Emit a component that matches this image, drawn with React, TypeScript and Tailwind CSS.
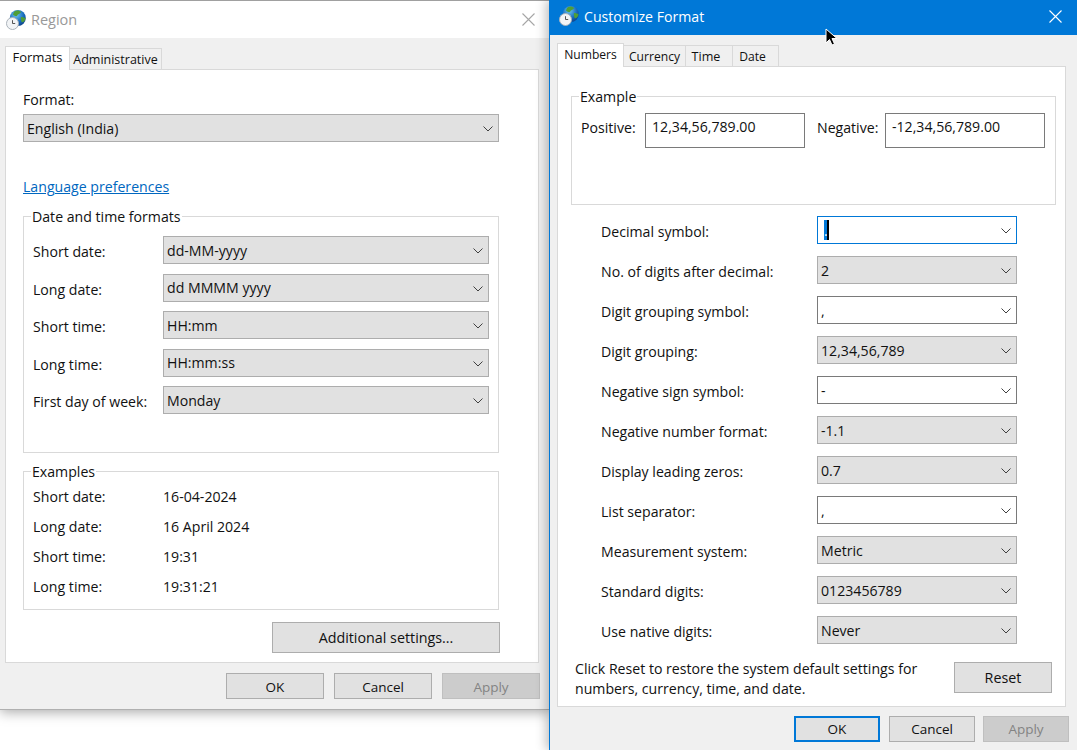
import React from "react";

const font = "font-['Open_Sans','Noto_Sans',sans-serif]";

function Chevron() {
  return (
    <svg width="10" height="6" viewBox="0 0 10 6" className="shrink-0 mt-[2px]">
      <path d="M0.5 0.5 L5 5 L9.5 0.5" fill="none" stroke="#404040" strokeWidth="1" />
    </svg>
  );
}

function GlobeIcon({ id, cls }: { id: string; cls?: string }) {
  return (
    <svg width="20" height="20" viewBox="0 0 20 20" className={`shrink-0 ${cls ?? ""}`}>
      <defs>
        <radialGradient id={id} cx="40%" cy="30%" r="75%">
          <stop offset="0%" stopColor="#6fc4f0" />
          <stop offset="60%" stopColor="#1a6fc0" />
          <stop offset="100%" stopColor="#0d3f86" />
        </radialGradient>
      </defs>
      <circle cx="11.8" cy="8" r="8" fill={`url(#${id})`} />
      <path d="M9 1 C11 0 14 0.5 15.2 2 C14 4 11.5 4 11 6 C9.5 6.5 7.5 5.5 7 4.5 C7.4 3 8 2 9 1Z" fill="#4f9e38" />
      <path d="M15 7 C16.5 7 18.8 7.5 19.6 8.5 C18.7 11.5 17 12.8 15.8 12.2 C15 10.5 14.6 8.5 15 7Z" fill="#4f9e38" />
      <circle cx="6.5" cy="13.5" r="6" fill="#f2f4f6" stroke="#aab2ba" strokeWidth="1" />
      <path d="M6.5 10.2 V13.5 H9.2" fill="none" stroke="#555" strokeWidth="1" />
    </svg>
  );
}

function CloseX({ color }: { color: string }) {
  return (
    <svg width="13" height="13" viewBox="0 0 13 13">
      <path d="M0.5 0.5 L12.5 12.5 M12.5 0.5 L0.5 12.5" stroke={color} strokeWidth="1.1" />
    </svg>
  );
}

function Select({
  value,
  white,
  focus,
  cls,
}: {
  value?: string;
  white?: boolean;
  focus?: boolean;
  cls: string;
}) {
  const skin = focus
    ? "bg-white border-[#0078d7]"
    : white
      ? "bg-white border-[#7a7a7a]"
      : "bg-[#e1e1e1] border-[#adadad]";
  return (
    <div className={`flex items-center justify-between border h-[28px] pl-[3px] pr-[5px] text-[14.13px] text-[#111] ${skin} ${cls}`}>
      {focus ? (
        <span className="flex items-center h-[20px] ml-[3px]">
          <span className="w-[3px] h-[20px] bg-[#0078d7] text-white text-[14px] leading-[22px] overflow-hidden">{value}</span>
          <span className="w-[2px] h-[20px] bg-black" />
        </span>
      ) : (
        <span className="whitespace-nowrap leading-none pt-[2px]">{value}</span>
      )}
      <Chevron />
    </div>
  );
}

function Btn({ label, cls, disabled, primary }: { label: string; cls: string; disabled?: boolean; primary?: boolean }) {
  const skin = disabled
    ? "bg-[#cccccc] border-[#bfbfbf] text-[#838383]"
    : primary
      ? "bg-[#e1e1e1] border-[#0078d7] border-2 text-[#111]"
      : "bg-[#e1e1e1] border-[#adadad] text-[#111]";
  return (
    <div className={`flex items-center justify-center border text-[13.5px] ${skin} ${cls}`}>{label}</div>
  );
}

function Tab({ label, active, cls }: { label: string; active?: boolean; cls: string }) {
  return (
    <div
      className={`flex items-center justify-center border border-[#d9d9d9] text-[#111] whitespace-nowrap ${
        active ? "bg-white border-b-0 h-[24px] relative z-10 -mb-px pb-px" : "bg-[#f0f0f0] border-l-0 border-b-0 h-[21px] pt-[2px]"
      } ${cls}`}
    >
      {label}
    </div>
  );
}

function Legend({ label, cls }: { label: string; cls: string }) {
  return <span className={`absolute top-[-10px] bg-white px-px text-[14.13px] leading-[20px] text-[#111] whitespace-nowrap ${cls}`}>{label}</span>;
}

const dateRows = [
  ["Short date:", "dd-MM-yyyy"],
  ["Long date:", "dd MMMM yyyy"],
  ["Short time:", "HH:mm"],
  ["Long time:", "HH:mm:ss"],
  ["First day of week:", "Monday"],
];
const exampleRows = [
  ["Short date:", "16-04-2024"],
  ["Long date:", "16 April 2024"],
  ["Short time:", "19:31"],
  ["Long time:", "19:31:21"],
];
const numRows: [string, string, "white" | "gray" | "focus"][] = [
  ["Decimal symbol:", ".", "focus"],
  ["No. of digits after decimal:", "2", "gray"],
  ["Digit grouping symbol:", ",", "white"],
  ["Digit grouping:", "12,34,56,789", "gray"],
  ["Negative sign symbol:", "-", "white"],
  ["Negative number format:", "-1.1", "gray"],
  ["Display leading zeros:", "0.7", "gray"],
  ["List separator:", ",", "white"],
  ["Measurement system:", "Metric", "gray"],
  ["Standard digits:", "0123456789", "gray"],
  ["Use native digits:", "Never", "gray"],
];

function RegionWindow() {
  return (
    <div className="absolute left-0 top-0 w-[550px] h-[710px] flex flex-col bg-[#f0f0f0] shadow-[0_2px_12px_rgba(0,0,0,0.35)] border-b border-[#b0b0b0]">
      <div className="h-[38px] bg-white flex items-center pl-[6px] pr-[15px] gap-[5px] border-t border-[#a0a0a0]">
        <GlobeIcon id="g1" />
        <span className="text-[14.5px] text-[#999999] flex-1">Region</span>
        <CloseX color="#a6a6a6" />
      </div>
      <div className="flex items-end pl-[5px] h-[31px]">
        <Tab label="Formats" active cls="w-[65px] text-[13px]" />
        <Tab label="Administrative" cls="w-[92px] border-l text-[12.5px]" />
      </div>
      <div className="ml-[5px] w-[534px] h-[594px] bg-white border border-[#d9d9d9] pt-[20px] pl-[17px] flex flex-col">
        <div className="text-[14.13px] leading-[20px] text-[#111] h-[24px]">Format:</div>
        <Select value="English (India)" cls="w-[476px]" />
        <div className="mt-[35px] text-[14.13px] leading-[20px] text-[#0067c0] underline">Language preferences</div>
        <div className="relative mt-[19px] w-[476px] h-[237px] border border-[#d9d9d9] pt-[19px] pl-[9px] flex flex-col gap-[9.5px]">
          <Legend label="Date and time formats" cls="left-[7px]" />
          {dateRows.map(([l, v]) => (
            <div key={l} className="flex items-center">
              <span className="w-[130px] pt-[4px] text-[14.13px] text-[#111] whitespace-nowrap">{l}</span>
              <Select value={v} cls="w-[326px]" />
            </div>
          ))}
        </div>
        <div className="relative mt-[18px] w-[476px] h-[139px] border border-[#d9d9d9] pt-[10px] pl-[9px] flex flex-col">
          <Legend label="Examples" cls="left-[7px]" />
          {exampleRows.map(([l, v]) => (
            <div key={l} className="flex items-center h-[30px] text-[14.13px] text-[#111]">
              <span className="w-[130px]">{l}</span>
              <span>{v}</span>
            </div>
          ))}
        </div>
        <div className="mt-[12px] flex">
          <Btn label="Additional settings..." cls="ml-[249px] w-[228px] h-[31px] !text-[14.3px]" />
        </div>
      </div>
      <div className="flex justify-end gap-[10px] pr-[10px] mt-[10px]">
        <Btn label="OK" cls="w-[98px] h-[26px] pt-[2px]" />
        <Btn label="Cancel" cls="w-[98px] h-[26px] pt-[2px]" />
        <Btn label="Apply" disabled cls="w-[98px] h-[26px] pt-[2px]" />
      </div>
    </div>
  );
}

function CustomizeWindow() {
  return (
    <div className="absolute left-[549px] top-0 w-[528px] h-[750px] flex flex-col bg-[#f0f0f0] border-l border-[#0078d7] shadow-[-3px_0_10px_rgba(0,0,0,0.25)]">
      <div className="h-[35px] bg-[#0078d7] flex items-center pl-[9px] pr-[15px] pb-[2px] gap-[5px]">
        <GlobeIcon id="g2" cls="-mt-[2px]" />
        <span className="text-[14.13px] text-white flex-1">Customize Format</span>
        <CloseX color="#ffffff" />
      </div>
      <div className="flex items-end pl-[7px] h-[31px]">
        <Tab label="Numbers" active cls="w-[67px] text-[12.1px]" />
        <Tab label="Currency" cls="w-[62px] text-[12.1px] border-l" />
        <Tab label="Time" cls="w-[47px] text-[12.6px] pr-[6px]" />
        <Tab label="Date" cls="w-[46px] text-[12.1px] pr-[6px]" />
      </div>
      <div className="ml-[7px] w-[509px] h-[641px] bg-white border border-[#d9d9d9] pt-[29px] pl-[13px] flex flex-col">
        <div className="relative w-[485px] h-[109px] border border-[#d9d9d9] pt-[16px] pl-[9px] flex items-start">
          <Legend label="Example" cls="left-[7px]" />
          <span className="w-[64px] h-[35px] pb-[5px] flex items-center text-[14.13px] text-[#111]">Positive:</span>
          <div className="w-[160px] h-[35px] border border-[#7a7a7a] pl-[6px] pt-[3px] text-[14.13px] leading-[20px] text-[#111]">12,34,56,789.00</div>
          <span className="ml-[12px] w-[68px] h-[35px] pb-[5px] flex items-center text-[14.13px] text-[#111] whitespace-nowrap">Negative:</span>
          <div className="w-[160px] h-[35px] border border-[#7a7a7a] pl-[6px] pt-[3px] text-[14.13px] leading-[20px] text-[#111]">-12,34,56,789.00</div>
        </div>
        <div className="mt-[11px] pl-[30px] flex flex-col gap-[12px]">
          {numRows.map(([l, v, k]) => (
            <div key={l} className="flex items-center">
              <span className="w-[216px] pt-[4px] text-[14.13px] text-[#111] whitespace-nowrap">{l}</span>
              <Select value={v} white={k === "white"} focus={k === "focus"} cls="w-[200px]" />
            </div>
          ))}
        </div>
        <div className="mt-[15px] flex items-start pl-[4px]">
          <div className="w-[379px] text-[14.13px] leading-[20px] text-[#111]">
            Click Reset to restore the system default settings for numbers, currency, time, and date.
          </div>
          <Btn label="Reset" cls="w-[98px] h-[31px] !text-[14.3px] mt-[3px]" />
        </div>
      </div>
      <div className="flex justify-end pr-[8px] mt-[9px]">
        <Btn label="OK" primary cls="w-[86px] h-[26px] mr-[9px]" />
        <Btn label="Cancel" cls="w-[86px] h-[26px] mr-[8px]" />
        <Btn label="Apply" disabled cls="w-[86px] h-[26px]" />
      </div>
      <svg width="14" height="20" viewBox="0 0 14 20" className="absolute left-[275px] top-[28px]">
        <path d="M1 1 L1 15 L4.5 11.5 L7 17 L9.5 16 L7 10.5 L12 10.5 Z" fill="#000" stroke="#fff" strokeWidth="1" />
      </svg>
    </div>
  );
}

export default function App() {
  return (
    <div className={`relative w-[1077px] h-[750px] overflow-hidden bg-white ${font}`}>
      <RegionWindow />
      <CustomizeWindow />
    </div>
  );
}
